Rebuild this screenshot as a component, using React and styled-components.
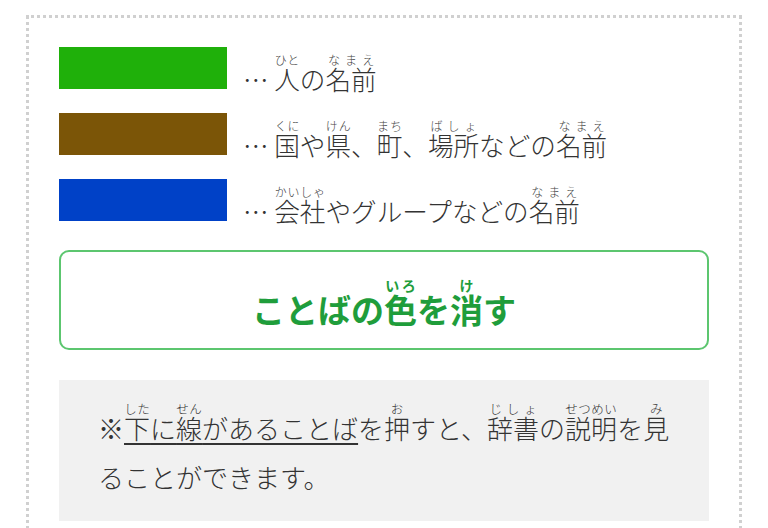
import React from "react";
import styled, { createGlobalStyle } from "styled-components";

const Global = createGlobalStyle`
  html, body { margin: 0; padding: 0; background: #fff; }
  body { font-family: "Noto Sans CJK JP", "Noto Sans", sans-serif; color: #333; }
`;

const Frame = styled.div`
  box-sizing: border-box;
  width: 716px;
  margin: 15px 0 0 26px;
  border: 3px dotted #d0d0d0;
  padding: 29px 30px 40px 30px;
  min-height: 600px;
`;

const Legend = styled.div`
  display: flex;
  flex-direction: column;
  gap: 24px;
`;

const Row = styled.div`
  display: flex;
  align-items: center;
  height: 42px;
`;

const Swatch = styled.div`
  width: 168px;
  height: 42px;
  flex: none;
  background: ${(p) => p.$color};
  margin-right: 16px;
`;

const Label = styled.div`
  font-size: 25.6px;
  font-weight: 300;
  line-height: 1;
  color: #333;
  white-space: nowrap;
  margin-top: 9px;
  ruby rt { font-size: 12px; color: #444; }
`;

const ClearButton = styled.button`
  box-sizing: border-box;
  display: flex;
  align-items: center;
  justify-content: center;
  width: 100%;
  height: 100px;
  margin-top: 29px;
  background: #fff;
  border: 2px solid #5cc66f;
  border-radius: 10px;
  font-family: "Noto Sans CJK JP", sans-serif;
  font-size: 33px;
  font-weight: 700;
  color: #1f9d3b;
  padding: 10px 0 0 0;
  cursor: pointer;
  ruby rt { font-size: 14px; font-weight: 700; }
`;

const Note = styled.div`
  margin-top: 30px;
  background: #f1f1f1;
  padding: 23px 28px 20px 39px;
  font-size: 26px;
  font-weight: 300;
  line-height: 49px;
  color: #333;
  ruby rt { font-size: 12.5px; line-height: 1; }
`;

const Under = styled.span`
  text-decoration: underline;
  text-decoration-thickness: 2px;
  text-underline-offset: 4px;
`;

const R = ({ b, t }) => (
  <ruby>
    {b}
    <rt>{t}</rt>
  </ruby>
);

export default function App() {
  return (
    <>
      <Global />
      <Frame>
        <Legend>
          <Row>
            <Swatch $color="#1fb00a" />
            <Label>
              … <R b="人" t="ひと" />の<R b="名前" t="なまえ" />
            </Label>
          </Row>
          <Row>
            <Swatch $color="#7b5507" />
            <Label>
              … <R b="国" t="くに" />や<R b="県" t="けん" />、<R b="町" t="まち" />、
              <R b="場所" t="ばしょ" />などの<R b="名前" t="なまえ" />
            </Label>
          </Row>
          <Row>
            <Swatch $color="#0041c7" />
            <Label>
              … <R b="会社" t="かいしゃ" />やグループなどの<R b="名前" t="なまえ" />
            </Label>
          </Row>
        </Legend>
        <ClearButton type="button">
          <span>
            ことばの<R b="色" t="いろ" />を<R b="消" t="け" />す
          </span>
        </ClearButton>
        <Note>
          ※
          <Under>
            <R b="下" t="した" />に<R b="線" t="せん" />があることば
          </Under>
          を<R b="押" t="お" />すと、<R b="辞書" t="じしょ" />の<R b="説明" t="せつめい" />を
          <R b="見" t="み" />ることができます。
        </Note>
      </Frame>
    </>
  );
}
